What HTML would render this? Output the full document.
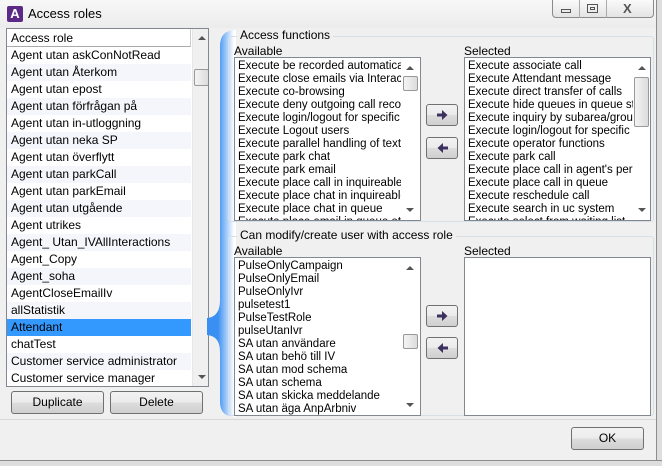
<!DOCTYPE html>
<html><head><meta charset="utf-8"><style>
*{margin:0;padding:0;box-sizing:border-box}
body{width:662px;height:466px;background:#f0f0f0;font-family:"Liberation Sans","DejaVu Sans",sans-serif;font-size:12px;color:#000;position:relative;overflow:hidden}
.a{position:absolute}
.list{position:absolute;background:#fff;border:1px solid #828790;overflow:hidden}
.row{height:13px;line-height:13px;padding-left:3px;white-space:nowrap;font-size:11.5px}
.lrow{height:17px;line-height:17px;padding-left:4px;white-space:nowrap;font-size:12px}
.alt{background:#f4f6fb}
.sel{background:#3399ff;color:#000}
.sb{position:absolute;background:#f0f0f0;border-left:1px solid #e6e6e6}
.thumb{position:absolute;left:1px;width:15px;background:linear-gradient(to right,#f4f4f4,#dcdcdc);border:1px solid #999;border-radius:2px}
.up,.dn{position:absolute;left:5px;width:0;height:0;border-left:4px solid transparent;border-right:4px solid transparent}
.up{border-bottom:4px solid #555}
.dn{border-top:4px solid #555}
.btn{position:absolute;border:1px solid #707070;border-radius:3px;background:linear-gradient(#f2f2f2 0%,#ebebeb 50%,#dddddd 51%,#cfcfcf 100%);text-align:center;font-size:12px}
.btn svg{position:absolute;left:10px;top:5px}
.grp{position:absolute;border:1px solid #d5dfe5;border-radius:3px}
.lbl{position:absolute;background:#f0f0f0;padding:0 3px;line-height:13px}
</style></head><body>
<div class="a" style="left:0;top:0;width:662px;height:28px;background:linear-gradient(#f7f7f7,#ececec)"></div>
<div class="a" style="left:7px;top:6px;width:16px;height:16px;background:#5b2a86;border-radius:2px;color:#fff;font-size:13px;line-height:16px;text-align:center;font-weight:bold">A</div>
<div class="a" style="left:28px;top:6px;font-size:13px">Access roles</div>
<div class="a" style="left:552px;top:0;width:102px;height:18px;border:1px solid #8a8a8a;border-top:none;border-radius:0 0 4px 4px;background:linear-gradient(#fafafa,#e4e4e4)"></div>
<div class="a" style="left:579px;top:0;width:1px;height:18px;background:#aaa"></div>
<div class="a" style="left:606px;top:0;width:1px;height:18px;background:#aaa"></div>
<div class="a" style="left:561px;top:9px;width:10px;height:4px;border:1px solid #555"></div>
<div class="a" style="left:587px;top:4px;width:11px;height:9px;border:1px solid #555"><div style="margin:2px;width:5px;height:3px;border:1px solid #555"></div></div>
<div class="a" style="left:623px;top:1px;font-size:13px;color:#555;font-weight:bold">X</div>
<div class="a" style="left:656px;top:0;width:6px;height:466px;background:#dedede;border-left:1px solid #8c8c8c"></div>
<div class="a" style="left:0;top:460px;width:662px;height:6px;background:#dedede;border-top:1px solid #8c8c8c"></div>

<div class="list" style="left:6px;top:28px;width:203px;height:359px;border-color:#828790">
 <div class="a" style="left:0;top:0;width:184px;height:18px;background:#fff;border-bottom:1px solid #aaa;border-right:1px solid #ccc;line-height:18px;padding-left:4px">Access role</div>
 <div class="a" style="left:0;top:18px;width:184px">
  <div class="lrow">Agent utan askConNotRead</div>
  <div class="lrow alt">Agent utan Återkom</div>
  <div class="lrow">Agent utan epost</div>
  <div class="lrow alt">Agent utan förfrågan på</div>
  <div class="lrow">Agent utan in-utloggning</div>
  <div class="lrow alt">Agent utan neka SP</div>
  <div class="lrow">Agent utan överflytt</div>
  <div class="lrow alt">Agent utan parkCall</div>
  <div class="lrow">Agent utan parkEmail</div>
  <div class="lrow alt">Agent utan utgående</div>
  <div class="lrow">Agent utrikes</div>
  <div class="lrow alt">Agent_ Utan_IVAllInteractions</div>
  <div class="lrow">Agent_Copy</div>
  <div class="lrow alt">Agent_soha</div>
  <div class="lrow">AgentCloseEmailIv</div>
  <div class="lrow alt">allStatistik</div>
  <div class="lrow sel">Attendant</div>
  <div class="lrow">chatTest</div>
  <div class="lrow alt">Customer service administrator</div>
  <div class="lrow">Customer service manager</div>
 </div>
 <div class="sb" style="left:185px;top:0;width:17px;height:357px">
  <div class="up" style="top:7px"></div>
  <div class="thumb" style="top:40px;height:17px"></div>
  <div class="dn" style="top:346px"></div>
 </div>
</div>
<div class="btn" style="left:11px;top:391px;width:93px;height:23px;line-height:21px">Duplicate</div>
<div class="btn" style="left:110px;top:391px;width:93px;height:23px;line-height:21px">Delete</div>

<svg class="a" style="left:0;top:0" width="662" height="466">
<defs><linearGradient id="g" gradientUnits="userSpaceOnUse" x1="218" y1="0" x2="234" y2="0"><stop offset="0" stop-color="#3a8ff2"/><stop offset="1" stop-color="#ffffff"/></linearGradient></defs>
<path d="M236,30 Q220,30 220,46 L220,300 Q220,317 207,318 L207,335 Q220,336 220,352 L220,402 Q220,417 236,417 Z" fill="url(#g)"/>
</svg>

<div class="grp" style="left:228px;top:36px;width:426px;height:186px"></div>
<div class="lbl" style="left:237px;top:29px">Access functions</div>
<div class="a" style="left:234px;top:44px">Available</div>
<div class="list" style="left:234px;top:57px;width:187px;height:164px">
 <div class="a" style="left:0;top:2px;width:166px">
  <div class="row">Execute be recorded automatically</div>
  <div class="row">Execute close emails via Interactions</div>
  <div class="row">Execute co-browsing</div>
  <div class="row">Execute deny outgoing call record</div>
  <div class="row">Execute login/logout for specific queue</div>
  <div class="row">Execute Logout users</div>
  <div class="row">Execute parallel handling of text and</div>
  <div class="row">Execute park chat</div>
  <div class="row">Execute park email</div>
  <div class="row">Execute place call in inquireable agent</div>
  <div class="row">Execute place chat in inquireable agent</div>
  <div class="row">Execute place chat in queue</div>
  <div class="row">Execute place email in queue other</div>
 </div>
 <div class="sb" style="left:166px;top:0;width:19px;height:162px;background:#fff;border:none">
  <div class="up" style="top:8px"></div>
  <div class="thumb" style="top:18px;height:15px;left:2px"></div>
  <div class="dn" style="top:150px"></div>
 </div>
</div>
<div class="btn" style="left:426px;top:104px;width:32px;height:22px"><svg width="11" height="10"><path d="M0,3.5H5V0L10.5,5L5,10V6.5H0Z" fill="#3c3060"/></svg></div>
<div class="btn" style="left:426px;top:137px;width:32px;height:22px"><svg width="11" height="10"><path d="M11,3.5H6V0L0.5,5L6,10V6.5H11Z" fill="#3c3060"/></svg></div>
<div class="a" style="left:464px;top:44px">Selected</div>
<div class="list" style="left:464px;top:57px;width:187px;height:164px">
 <div class="a" style="left:0;top:2px;width:168px">
  <div class="row">Execute associate call</div>
  <div class="row">Execute Attendant message</div>
  <div class="row">Execute direct transfer of calls</div>
  <div class="row">Execute hide queues in queue statistics</div>
  <div class="row">Execute inquiry by subarea/group/agent</div>
  <div class="row">Execute login/logout for specific service</div>
  <div class="row">Execute operator functions</div>
  <div class="row">Execute park call</div>
  <div class="row">Execute place call in agent's personal</div>
  <div class="row">Execute place call in queue</div>
  <div class="row">Execute reschedule call</div>
  <div class="row">Execute search in uc system</div>
  <div class="row">Execute select from waiting list</div>
 </div>
 <div class="sb" style="left:168px;top:0;width:17px;height:162px;background:#fff;border:none">
  <div class="up" style="top:8px"></div>
  <div class="thumb" style="top:19px;height:50px;left:1px"></div>
  <div class="dn" style="top:150px"></div>
 </div>
</div>

<div class="grp" style="left:228px;top:236px;width:426px;height:180px"></div>
<div class="lbl" style="left:237px;top:229px">Can modify/create user with access role</div>
<div class="a" style="left:234px;top:244px">Available</div>
<div class="list" style="left:234px;top:257px;width:187px;height:159px">
 <div class="a" style="left:0;top:2px;width:166px">
  <div class="row">PulseOnlyCampaign</div>
  <div class="row">PulseOnlyEmail</div>
  <div class="row">PulseOnlyIvr</div>
  <div class="row">pulsetest1</div>
  <div class="row">PulseTestRole</div>
  <div class="row">pulseUtanIvr</div>
  <div class="row">SA utan användare</div>
  <div class="row">SA utan behö till IV</div>
  <div class="row">SA utan mod schema</div>
  <div class="row">SA utan schema</div>
  <div class="row">SA utan skicka meddelande</div>
  <div class="row">SA utan äga AnpArbniv</div>
 </div>
 <div class="sb" style="left:166px;top:0;width:19px;height:157px;background:#fff;border:none">
  <div class="up" style="top:8px"></div>
  <div class="thumb" style="top:76px;height:15px;left:2px"></div>
  <div class="dn" style="top:145px"></div>
 </div>
</div>
<div class="btn" style="left:426px;top:305px;width:32px;height:22px"><svg width="11" height="10"><path d="M0,3.5H5V0L10.5,5L5,10V6.5H0Z" fill="#3c3060"/></svg></div>
<div class="btn" style="left:426px;top:337px;width:32px;height:22px"><svg width="11" height="10"><path d="M11,3.5H6V0L0.5,5L6,10V6.5H11Z" fill="#3c3060"/></svg></div>
<div class="a" style="left:464px;top:244px">Selected</div>
<div class="list" style="left:464px;top:257px;width:187px;height:159px"></div>

<div class="a" style="left:0;top:419px;width:656px;height:1px;background:#d8d8d8"></div>
<div class="btn" style="left:571px;top:427px;width:73px;height:23px;line-height:21px">OK</div>
</body></html>
